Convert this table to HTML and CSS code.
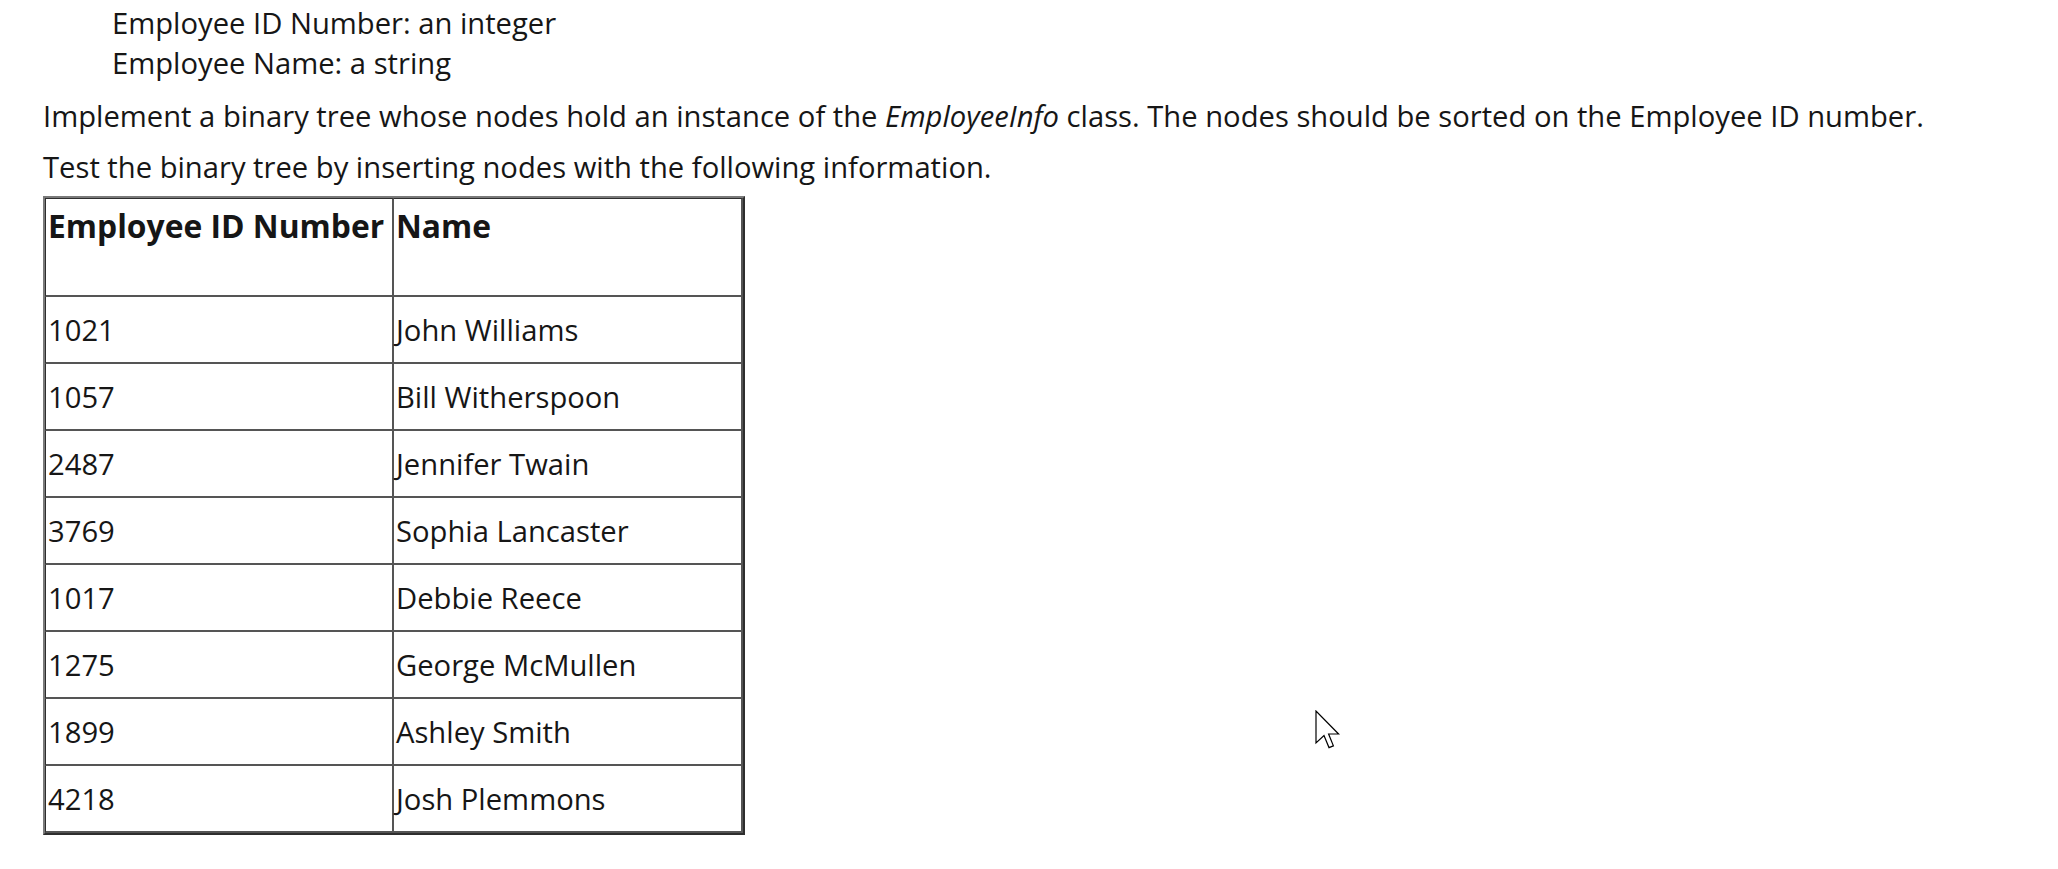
FILE: index.html
```html
<!DOCTYPE html>
<html lang="en">
<head>
<meta charset="utf-8">
<title>Binary Tree Assignment</title>
<link rel="stylesheet" href="styles.css">
</head>
<body>
<div class="content">
  <div class="fields">
    <p class="field">Employee ID Number: an integer</p>
    <p class="field">Employee Name: a string</p>
  </div>
  <p class="para">Implement a binary tree whose nodes hold an instance of the <em>EmployeeInfo</em> class. The nodes should be sorted on the Employee ID number.</p>
  <p class="para">Test the binary tree by inserting nodes with the following information.</p>
  <table class="emp-table">
    <thead>
      <tr><th class="col-id">Employee ID Number</th><th class="col-name">Name</th></tr>
    </thead>
    <tbody>
      <tr><td>1021</td><td>John Williams</td></tr>
      <tr><td>1057</td><td>Bill Witherspoon</td></tr>
      <tr><td>2487</td><td>Jennifer Twain</td></tr>
      <tr><td>3769</td><td>Sophia Lancaster</td></tr>
      <tr><td>1017</td><td>Debbie Reece</td></tr>
      <tr><td>1275</td><td>George McMullen</td></tr>
      <tr><td>1899</td><td>Ashley Smith</td></tr>
      <tr><td>4218</td><td>Josh Plemmons</td></tr>
    </tbody>
  </table>
</div>
<svg class="cursor" width="26" height="40" viewBox="0 0 13 20" aria-hidden="true">
  <path d="M0.5 0.5 L0.5 16.5 L4.5 12.8 L7 18.8 L9.2 17.9 L6.8 12 L11.8 12 Z" fill="#fff" stroke="#000" stroke-width="0.6" stroke-linejoin="miter"/>
</svg>
</body>
</html>
```

FILE: styles.css
```css
html, body {
  margin: 0;
  padding: 0;
  background: #ffffff;
}

body {
  font-family: "Open Sans", "Noto Sans", sans-serif;
  font-size: 29.2px;
  color: #161616;
  position: relative;
  min-height: 869px;
  overflow: hidden;
}

.content {
  padding: 3px 0 0 43px;
}

.fields {
  padding-left: 69px;
}

.field {
  margin: 0;
  line-height: 40px;
}

.para {
  margin: 13px 0 0 0;
  line-height: 40px;
}

.para + .para {
  margin-top: 11px;
}

.emp-table {
  margin-top: 9px;
  border-collapse: separate;
  border-spacing: 0;
  border: 2px solid;
  border-color: #7a7a7a #2e2e2e #2e2e2e #7a7a7a;
  width: 702px;
}

.emp-table th,
.emp-table td {
  padding: 0 0 0 2px;
  text-align: left;
  border-right: 2px solid #555555;
  border-bottom: 2px solid #555555;
  line-height: 40px;
}

.emp-table th {
  font-size: 31.8px;
  font-weight: 700;
  vertical-align: top;
  height: 89px;
  padding-top: 7px;
  border-top: 1px solid #2e2e2e;
}

.emp-table td {
  height: 65px;
  vertical-align: middle;
}

.emp-table tr > :first-child {
  border-left: 1px solid #2e2e2e;
}

.col-id {
  width: 344px;
}

.cursor {
  position: absolute;
  left: 1315px;
  top: 710px;
}
```
